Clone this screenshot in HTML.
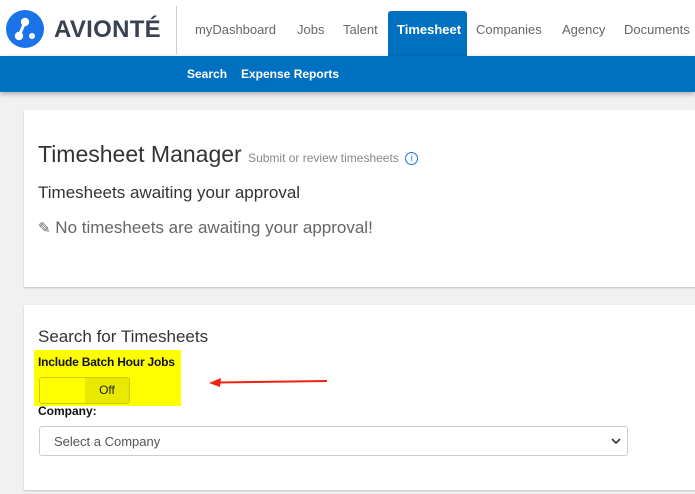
<!DOCTYPE html>
<html><head><style>
body{margin:0;width:695px;height:494px;overflow:hidden;background:#f1f1f1;font-family:"Liberation Sans",sans-serif;position:relative}
.hdr{position:absolute;left:0;top:0;width:695px;height:56px;background:#fff}
.bar{position:absolute;left:0;top:56px;width:695px;height:36px;background:#0070c0;box-shadow:0 2px 5px rgba(0,0,0,.3)}
.nav{position:absolute;top:22px;font-size:13px;color:#666}
.card{position:absolute;left:24px;width:680px;background:#fff;box-shadow:0 1px 2px rgba(0,0,0,.2)}
.t{position:absolute;white-space:nowrap}
</style></head><body>
<div class="hdr">
<svg style="position:absolute;left:6px;top:10px" width="38" height="38" viewBox="0 0 38 38"><circle cx="19" cy="19" r="19" fill="#1a73e8"/><circle cx="19" cy="12" r="4.2" fill="#fff"/><circle cx="13" cy="26" r="4.2" fill="#fff"/><circle cx="26" cy="26" r="3" fill="#fff"/><path d="M19 12 L13 26" stroke="#fff" stroke-width="3"/></svg>
<div class="t" style="left:54px;top:16px;font-size:24px;font-weight:bold;color:#3a4150;letter-spacing:.3px">AVIONTÉ</div>
<div style="position:absolute;left:176px;top:6px;width:1px;height:48px;background:#ccc"></div>
<div class="nav" style="left:195px">myDashboard</div>
<div class="nav" style="left:297px">Jobs</div>
<div class="nav" style="left:343px">Talent</div>
<div style="position:absolute;left:388px;top:11px;width:79px;height:45px;background:#0070c0;border-radius:3px 3px 0 0"></div>
<div class="nav" style="left:397px;color:#fff;font-weight:bold">Timesheet</div>
<div class="nav" style="left:476px">Companies</div>
<div class="nav" style="left:562px">Agency</div>
<div class="nav" style="left:624px">Documents</div>
</div>
<div class="bar">
<div class="t" style="left:187px;top:11px;font-size:12px;color:#fff;font-weight:bold">Search</div>
<div class="t" style="left:241px;top:11px;font-size:12px;color:#fff;font-weight:bold">Expense Reports</div>
</div>
<div class="card" style="top:110px;height:177px">
<div class="t" style="left:14px;top:31px;font-size:23px;color:#333">Timesheet Manager <span style="font-size:12px;color:#888">Submit or review timesheets</span> <span style="display:inline-block;width:11px;height:11px;border:1px solid #1a73e8;border-radius:50%;font-size:9px;color:#1a73e8;text-align:center;line-height:11px;vertical-align:1px">i</span></div>
<div class="t" style="left:14px;top:73px;font-size:17px;color:#333">Timesheets awaiting your approval</div>
<div class="t" style="left:14px;top:108px;font-size:17px;color:#666"><span style="font-size:15px">✎</span> No timesheets are awaiting your approval!</div>
</div>
<div class="card" style="top:305px;height:185px">
<div class="t" style="left:14px;top:22px;font-size:17px;color:#333">Search for Timesheets</div>
<div style="position:absolute;left:10px;top:45px;width:147px;height:56px;background:#ffff00"></div>
<div class="t" style="left:14px;top:50px;font-size:12px;color:#111;font-weight:bold;letter-spacing:-.2px">Include Batch Hour Jobs</div>
<div style="position:absolute;left:15px;top:72px;width:89px;height:25px;border:1px solid #cccc00;border-radius:3px;background:#ffff00;overflow:hidden"><div style="position:absolute;left:45px;top:0;width:44px;height:25px;background:#e8e800;font-size:12px;text-align:center;line-height:25px;color:#222">Off</div></div>
<div class="t" style="left:14px;top:99px;font-size:12px;color:#111;font-weight:bold">Company:</div>
<div style="position:absolute;left:15px;top:121px;width:587px;height:28px;border:1px solid #ccc;border-radius:3px"><span class="t" style="left:14px;top:7px;font-size:13px;color:#555">Select a Company</span><svg style="position:absolute;right:6px;top:10px" width="10" height="8"><path d="M1 2 L5 6 L9 2" stroke="#333" stroke-width="1.6" fill="none"/></svg></div>
</div>
<svg style="position:absolute;left:205px;top:375px" width="125" height="15"><path d="M12 7.5 L122 6" stroke="#e21" stroke-width="2"/><path d="M4 8 L16 3 L15 12 Z" fill="#e21"/></svg>
</body></html>
